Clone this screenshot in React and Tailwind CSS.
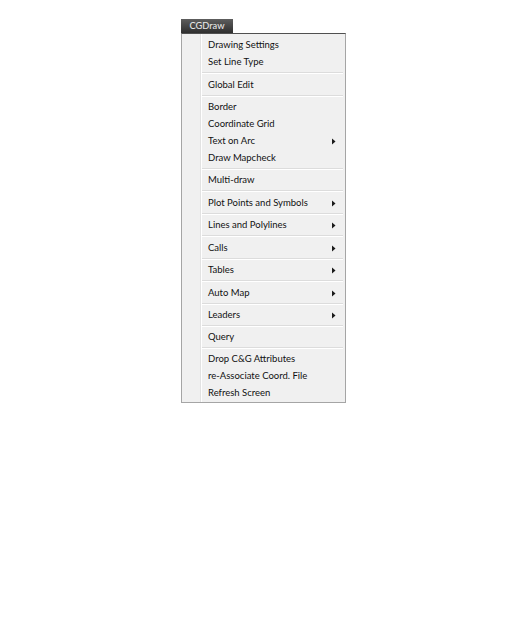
import React from "react";

const items = [
  { t: "Drawing Settings" },
  { t: "Set Line Type" },
  { sep: 6 },
  { t: "Global Edit" },
  { sep: 5 },
  { t: "Border" },
  { t: "Coordinate Grid" },
  { t: "Text on Arc", sub: true },
  { t: "Draw Mapcheck" },
  { sep: 5 },
  { t: "Multi-draw" },
  { sep: 6 },
  { t: "Plot Points and Symbols", sub: true },
  { sep: 5 },
  { t: "Lines and Polylines", sub: true },
  { sep: 6 },
  { t: "Calls", sub: true },
  { sep: 5 },
  { t: "Tables", sub: true },
  { sep: 6 },
  { t: "Auto Map", sub: true },
  { sep: 5 },
  { t: "Leaders", sub: true },
  { sep: 5 },
  { t: "Query" },
  { sep: 5 },
  { t: "Drop C&G Attributes" },
  { t: "re-Associate Coord. File" },
  { t: "Refresh Screen" },
];

function Arrow() {
  return (
    <svg width="4" height="7" viewBox="0 0 4 7" className="mr-[9px] shrink-0">
      <path d="M0 0.5 L3.5 3.5 L0 6.5 Z" fill="#1a1a1a" />
    </svg>
  );
}

export default function App() {
  return (
    <div
      className="min-h-[640px] w-[527px] bg-white pl-[181px] pt-[19px]"
      style={{ fontFamily: 'Lato, "Noto Sans", sans-serif' }}
    >
      <div className="flex h-[14px] w-[52px] items-center justify-center bg-gradient-to-b from-[#5e5e5e] to-[#2f2f2f] text-[9.3px] font-medium leading-none text-[#e6e6e6]">
        CGDraw
      </div>
      <div className="flex w-[165px] border border-[#a5a5a5] border-t-[#505050] bg-[#f0f0f0]">
        <div className="w-[19px] shrink-0 border-r border-[#e2e2e2]" />
        <div className="flex min-w-0 flex-1 flex-col border-l border-white pt-[2px] pb-[1px]">
          {items.map((it, i) =>
            it.sep ? (
              <div
                key={i}
                className={
                  "flex flex-col justify-center " +
                  (it.sep === 6 ? "h-[6px]" : "h-[5px]")
                }
              >
                <div className="mr-[2px] h-[2px] border-t border-b border-t-[#dcdcdc] border-b-white" />
              </div>
            ) : (
              <div
                key={i}
                className="flex h-[17px] items-center justify-between pl-[6px] pt-[1px] text-[9.5px] text-[#111111]"
              >
                <span className="whitespace-nowrap">{it.t}</span>
                {it.sub && <Arrow />}
              </div>
            )
          )}
        </div>
      </div>
    </div>
  );
}
